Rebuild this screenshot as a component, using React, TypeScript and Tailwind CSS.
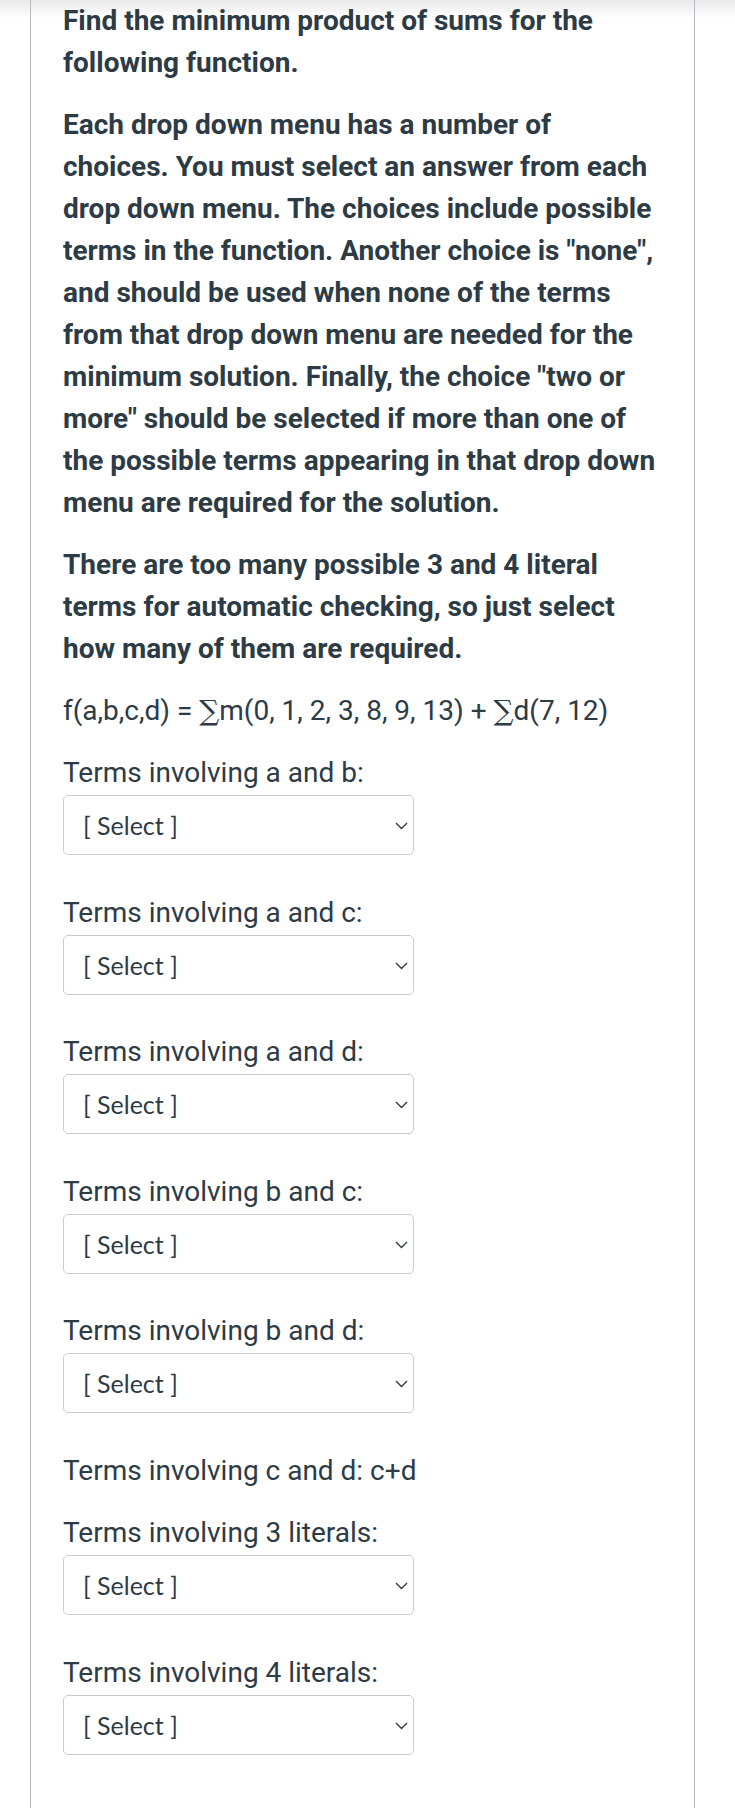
import React from "react";

const textFont = { fontFamily: "Roboto, 'Noto Sans', sans-serif" };

const questions = [
  { label: "Terms involving a and b:", select: true },
  { label: "Terms involving a and c:", select: true },
  { label: "Terms involving a and d:", select: true },
  { label: "Terms involving b and c:", select: true },
  { label: "Terms involving b and d:", select: true },
  { label: "Terms involving c and d: c+d", select: false },
  { label: "Terms involving 3 literals:", select: true },
  { label: "Terms involving 4 literals:", select: true },
];

function Dropdown() {
  return (
    <div className="relative mt-px w-[351px]">
      <select
        defaultValue=""
        className="h-[60px] w-full appearance-none rounded-[5px] border border-[#c7cdd1] bg-white pl-[19px] pr-10 text-[25px] text-[#2d3b45] outline-none"
        style={{ fontFamily: "Lato, 'Liberation Sans', sans-serif" }}
      >
        <option value="">[ Select ]</option>
        <option value="none">none</option>
        <option value="one">one</option>
        <option value="two">two or more</option>
      </select>
      <svg
        className="pointer-events-none absolute right-[6px] top-[27px]"
        width="13"
        height="8"
        viewBox="0 0 13 8"
        fill="none"
      >
        <path d="M1 1l5.5 5.5L12 1" stroke="#2d3b45" strokeWidth="1.4" />
      </svg>
    </div>
  );
}

export default function App() {
  return (
    <div className="min-h-[1808px] w-[735px] bg-[linear-gradient(to_bottom,#e9e9e9,#ffffff_18px)]">
      <div
        className="ml-[30px] min-h-[1808px] w-[665px] border-x border-[#b4b9bc] pl-[32px] pr-[34px] text-[28px] leading-[42px] text-[#2d3b45]"
        style={textFont}
      >
        <p className="mb-[20px] font-bold">
          Find the minimum product of sums for the following function.
        </p>
        <p className="mb-[20px] font-bold">
          Each drop down menu has a number of choices. You must select an answer
          from each drop down menu. The choices include possible terms in the
          function. Another choice is "none", and should be used when none of
          the terms from that drop down menu are needed for the minimum
          solution. Finally, the choice "two or more" should be selected if more
          than one of the possible terms appearing in that drop down menu are
          required for the solution.
        </p>
        <p className="mb-[20px] font-bold">
          There are too many possible 3 and 4 literal terms for automatic
          checking, so just select how many of them are required.
        </p>
        <p className="mb-[20px]">
          f(a,b,c,d) = <span className="font-['DejaVu_Serif',serif]">∑</span>m(0, 1, 2, 3, 8, 9, 13) +{" "}
          <span className="font-['DejaVu_Serif',serif]">∑</span>d(7, 12)
        </p>
        {questions.map((q) =>
          q.select ? (
            <div key={q.label} className="mb-[36.6px]">
              <p>{q.label}</p>
              <Dropdown />
            </div>
          ) : (
            <p key={q.label} className="mb-[20px]">
              {q.label}
            </p>
          )
        )}
      </div>
    </div>
  );
}
